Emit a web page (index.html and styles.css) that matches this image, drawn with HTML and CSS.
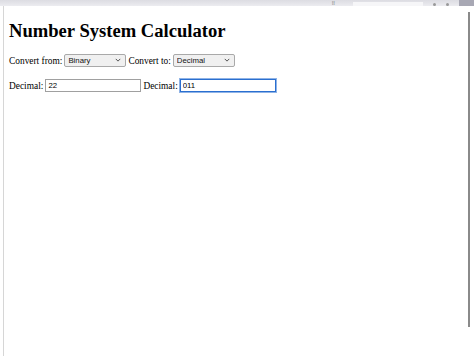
FILE: index.html
```html
<!DOCTYPE html>
<html lang="en">
<head>
    <meta charset="UTF-8">
    <meta name="viewport" content="width=device-width, initial-scale=1.0">
    <title>Number System Calculator</title>
    <link rel="stylesheet" href="styles.css">
</head>
<body>

    <div class="chrome">
        <span class="chrome-grip">⁞⁞</span>
        <span class="chrome-field"></span>
        <span class="chrome-dot"></span>
        <span class="chrome-dot"></span>
        <span class="chrome-btn"></span>
    </div>

    <div class="window">
        <div class="edge"></div>

        <div class="page">
            <h1>Number System Calculator</h1>

            <div class="row">
                <label for="from">Convert from:</label>
                <span class="select-wrap">
                    <select id="from">
                        <option>Binary</option>
                        <option>Decimal</option>
                        <option>Octal</option>
                        <option>Hexadecimal</option>
                    </select>
                    <svg class="chevron" viewBox="0 0 8 5"><path d="M1 1l3 3 3-3" fill="none" stroke="#333" stroke-width="1.1"/></svg>
                </span>
                <label for="to">Convert to:</label>
                <span class="select-wrap">
                    <select id="to">
                        <option>Decimal</option>
                        <option>Binary</option>
                        <option>Octal</option>
                        <option>Hexadecimal</option>
                    </select>
                    <svg class="chevron" viewBox="0 0 8 5"><path d="M1 1l3 3 3-3" fill="none" stroke="#333" stroke-width="1.1"/></svg>
                </span>
            </div>

            <div class="row">
                <label for="input">Decimal:</label>
                <input type="text" id="input" value="22">
                <label for="output">Decimal:</label>
                <input type="text" id="output" class="focused" value="011">
            </div>
        </div>

        <div class="scroll">
            <div class="thumb"></div>
        </div>
    </div>

</body>
</html>
```

FILE: styles.css
```css
body {
    margin: 0;
    height: 356px;
    display: flex;
    flex-direction: column;
    background: #fff;
    font-family: "Liberation Serif", "Times New Roman", serif;
    color: #000;
    overflow: hidden;
}
.chrome {
    height: 6px;
    background: linear-gradient(#dcdce2, #ececf0);
    display: flex;
    align-items: flex-end;
    justify-content: flex-end;
    gap: 10px;
}
.chrome-grip {
    font-size: 6px;
    line-height: 6px;
    color: #777;
    margin-right: 8px;
}
.chrome-field {
    width: 70px;
    height: 4px;
    background: #f6f6f8;
}
.chrome-dot {
    width: 3px;
    height: 3px;
    background: #999;
    border-radius: 2px;
}
.chrome-btn {
    width: 15px;
    height: 6px;
    background: #a8a8b4;
}
.window {
    flex: 1;
    display: flex;
}
.edge {
    width: 3px;
    border-right: 1px solid #d6d6d6;
}
.page {
    flex: 1;
    padding: 14px 5px 0;
}
h1 {
    font-size: 18.6px;
    line-height: 22px;
    font-weight: bold;
    margin: 0 0 12px;
}
.row {
    display: flex;
    align-items: center;
    gap: 2px;
    font-size: 9.4px;
    margin-bottom: 12px;
}
.select-wrap {
    position: relative;
    display: flex;
}
select {
    appearance: none;
    width: 62px;
    height: 13px;
    padding: 0 0 0 3px;
    font-family: "Liberation Sans", Arial, sans-serif;
    font-size: 7.8px;
    color: #111;
    border: 1px solid #a9a9a9;
    border-radius: 2px;
    background: #f0f0f0;
}
.chevron {
    position: absolute;
    right: 5px;
    top: 4px;
    width: 6px;
    height: 4px;
    pointer-events: none;
}
input {
    width: 96px;
    height: 13px;
    padding: 0 2px;
    box-sizing: border-box;
    font-family: "Liberation Sans", Arial, sans-serif;
    font-size: 7.8px;
    border: 1px solid #a0a0a0;
}
.focused {
    border: 1px solid #2a6fd0;
    box-shadow: 0 0 0 1px #8fb3e6;
    outline: none;
}
.scroll {
    width: 3px;
    padding-top: 6px;
    margin-right: 3px;
}
.thumb {
    height: 315px;
    width: 2px;
    background: #8a8a8a;
}
```
